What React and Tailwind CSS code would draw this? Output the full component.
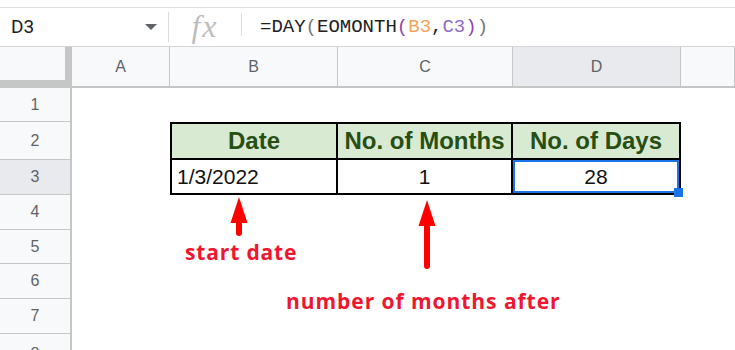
import React from 'react';

const headerCols = [
  { label: 'A', className: 'w-[98px] bg-[#f8f9fa]' },
  { label: 'B', className: 'w-[168px] bg-[#f8f9fa]' },
  { label: 'C', className: 'w-[175px] bg-[#f8f9fa]' },
  { label: 'D', className: 'w-[168px] bg-[#e8eaed]' },
  { label: '', className: 'flex-1 bg-[#f8f9fa]' },
];

const RowHead = ({ n, active }) => (
  <div
    className={
      'w-[72px] shrink-0 border-r-2 border-b border-[#c4c7c5] flex items-center justify-center text-[16px] text-[#5f6368] ' +
      (active ? 'bg-[#e8eaed]' : 'bg-[#f8f9fa]')
    }
  >
    {n}
  </div>
);

const Arrow = ({ height }) => (
  <svg width="20" height={height} viewBox={`0 0 20 ${height}`}>
    <polygon points="10,0 1.5,26 18.5,26" fill="#ff0000" />
    <line x1="10" y1="24" x2="10" y2={height - 3} stroke="#ff0000" strokeWidth="6" strokeLinecap="round" />
  </svg>
);

const App = () => {
  return (
    <div className="relative w-[735px] h-[350px] overflow-hidden bg-white font-['Liberation_Sans',Arial,sans-serif]">
      {/* top strip */}
      <div className="h-[8px] border-b border-[#e0e0e0]" />

      {/* Formula bar */}
      <div className="flex items-center h-[39px] border-b border-[#d3d5d8] bg-white">
        <div className="w-[168px] flex items-center justify-between pl-[11px] pr-[11px]">
          <span className="font-['Roboto',sans-serif] text-[19px] text-[#202124]">D3</span>
          <svg width="12" height="6" viewBox="0 0 12 6">
            <polygon points="0,0 12,0 6,6" fill="#5f6368" />
          </svg>
        </div>
        <div className="w-px h-[30px] bg-[#dadce0]" />
        <div className="w-[72px] flex items-center justify-center">
          <span className="font-['Liberation_Serif',serif] italic text-[32px] leading-none tracking-[2px] text-[#bdbdbd] -mt-[3px]">
            fx
          </span>
        </div>
        <div className="w-px h-[23px] bg-[#dadce0] -mt-[5px]" />
        <div className="pl-[18px] font-['Liberation_Mono',monospace] text-[19px] text-[#202124] whitespace-pre">
          <span>=DAY</span>
          <span className="text-[#777777]">(</span>
          <span>EOMONTH</span>
          <span className="text-[#8e44ad]">(</span>
          <span className="text-[#f4a35c]">B3</span>
          <span>,</span>
          <span className="text-[#8d6cc4]">C3</span>
          <span className="text-[#8e44ad]">)</span>
          <span className="text-[#777777]">)</span>
        </div>
      </div>

      {/* Column headers */}
      <div className="flex h-[41px]">
        <div className="w-[72px] shrink-0 bg-[#f8f9fa] border-r-[7px] border-b-[8px] border-[#c4c7c5]" />
        {headerCols.map((c, i) => (
          <div
            key={i}
            className={
              c.className +
              ' shrink-0 border-r border-b-2 border-[#c4c7c5] flex items-center justify-center text-[16px] text-[#5f6368]'
            }
          >
            {c.label}
          </div>
        ))}
      </div>

      {/* Row 1 */}
      <div className="flex h-[34px]">
        <RowHead n="1" />
        <div className="flex-1" />
      </div>

      {/* Row 2 - table header */}
      <div className="flex h-[38px]">
        <RowHead n="2" />
        <div className="w-[98px] shrink-0" />
        <div className="w-[168px] shrink-0 border-2 border-black bg-[#d9ead3] flex items-center justify-center text-[24px] font-bold text-[#274e13]">
          Date
        </div>
        <div className="w-[175px] shrink-0 border-y-2 border-r-2 border-black bg-[#d9ead3] flex items-center justify-center text-[24px] font-bold text-[#274e13]">
          No. of Months
        </div>
        <div className="w-[168px] shrink-0 border-y-2 border-r-2 border-black bg-[#d9ead3] flex items-center justify-center text-[24px] font-bold text-[#274e13]">
          No. of Days
        </div>
      </div>

      {/* Row 3 - data */}
      <div className="flex h-[35px]">
        <RowHead n="3" active />
        <div className="w-[98px] shrink-0" />
        <div className="w-[168px] shrink-0 border-x-2 border-b-2 border-black flex items-center pl-[5px] text-[21px] text-[#111]">
          1/3/2022
        </div>
        <div className="w-[175px] shrink-0 border-r-2 border-b-2 border-black flex items-center justify-center text-[21px] text-[#111]">
          1
        </div>
        <div className="relative w-[168px] shrink-0 border-r-2 border-b-2 border-black flex items-center justify-center text-[21px] text-[#111]">
          28
          <div className="absolute inset-0 border-2 border-[#1a73e8]" />
          <div className="absolute -right-[4px] -bottom-[4px] w-[9px] h-[9px] bg-[#1a73e8]" />
        </div>
      </div>

      {/* Rows 4-8 */}
      <div className="flex h-[35px]">
        <RowHead n="4" />
        <div className="flex-1" />
      </div>
      <div className="flex h-[34px]">
        <RowHead n="5" />
        <div className="flex-1" />
      </div>
      <div className="flex h-[35px]">
        <RowHead n="6" />
        <div className="flex-1" />
      </div>
      <div className="flex h-[35px]">
        <RowHead n="7" />
        <div className="flex-1" />
      </div>
      <div className="flex h-[35px] items-start">
        <div className="w-[72px] h-full shrink-0 border-r-2 border-[#c4c7c5] bg-[#f8f9fa] flex justify-center pt-[8px] text-[16px] text-[#5f6368]">
          8
        </div>
        <div className="flex-1" />
      </div>

      {/* Annotations */}
      <div className="absolute left-[229px] top-[197px]">
        <Arrow height={39} />
      </div>
      <div className="absolute left-[417px] top-[200px]">
        <Arrow height={69} />
      </div>
      <div className="absolute left-[185px] top-[238px] font-['Open_Sans',sans-serif] font-bold text-[21px] leading-[28px] tracking-[0.85px] text-[#f0162f]">
        start date
      </div>
      <div className="absolute left-[286px] top-[287px] font-['Open_Sans',sans-serif] font-bold text-[21px] leading-[28px] tracking-[0.95px] text-[#f0162f]">
        number of months after
      </div>
    </div>
  );
};

export default App;
